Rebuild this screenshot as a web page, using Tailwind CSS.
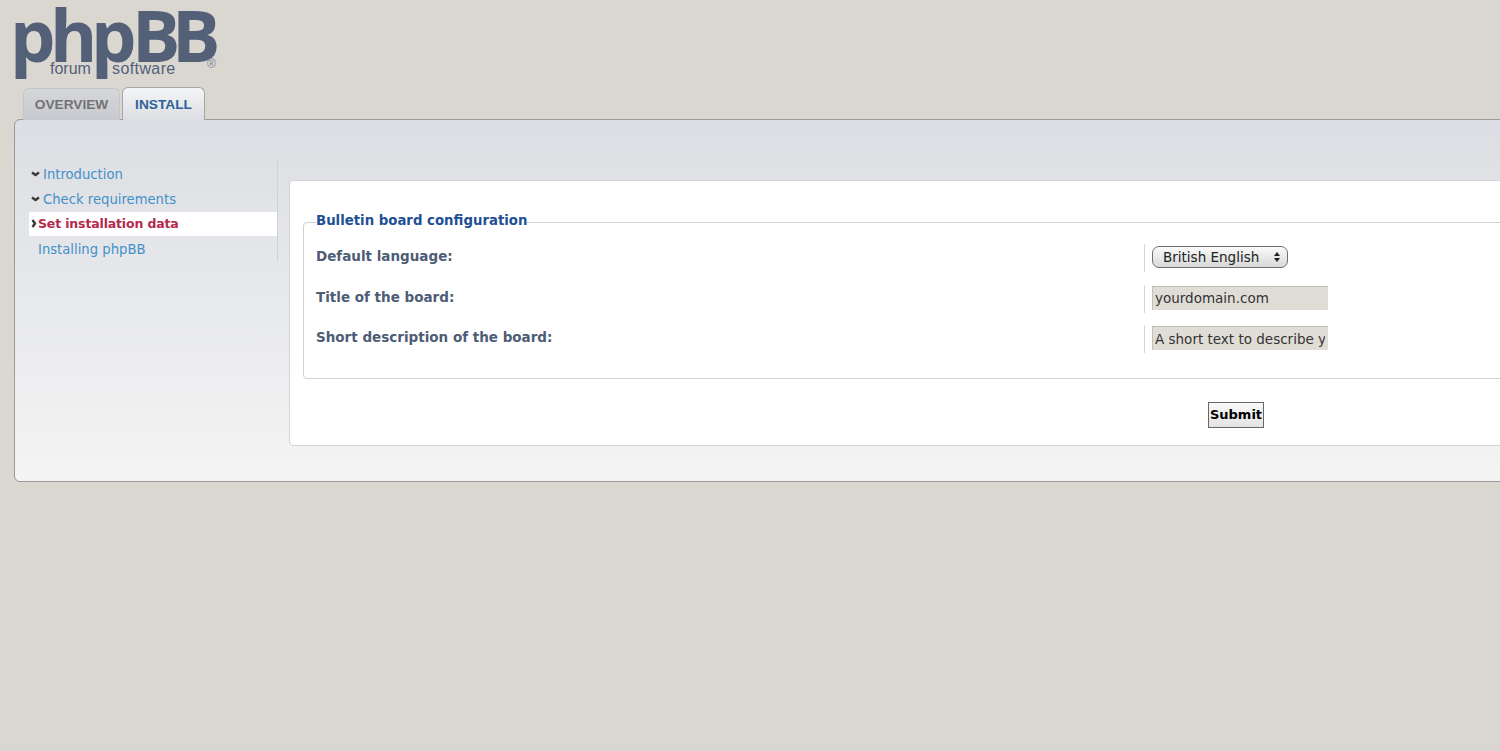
<!DOCTYPE html>
<html lang="en">
<head>
    <meta charset="UTF-8">
    <title>phpBB install</title>
    <script src="https://cdn.jsdelivr.net/npm/@tailwindcss/browser@4"></script>
</head>
<body class="bg-[#dad7d1] h-screen overflow-hidden font-['DejaVu_Sans',sans-serif]">
<div class="w-[1640px] pl-[14px]">
    <!-- logo -->
    <div class="h-[87px] relative">
        <svg class="absolute left-0 top-0 overflow-visible" width="220" height="87" viewBox="0 0 220 87">
            <text x="-4 36 77 118 158" y="62" font-family="Open Sans" font-weight="700" font-size="72" fill="#536078">phpBB</text>
            <text x="36" y="74" font-family="Liberation Sans" font-size="16" fill="#536078">forum</text>
            <text x="98" y="74" font-family="Liberation Sans" font-size="16" letter-spacing="0.4" fill="#536078">software</text>
            <text x="193" y="68" font-family="Liberation Sans" font-size="12" fill="#7d8798">®</text>
        </svg>
    </div>

    <!-- tabs -->
    <div class="flex items-end h-[33px] pl-[9px] gap-[2px] relative z-10 -mb-px">
        <div class="w-[97px] h-[32px] pt-[2px] flex items-center justify-center rounded-t-[6px] border border-b-0 border-[#c5c5c5] bg-gradient-to-b from-[#d6d7da] to-[#c7c9ce] text-[13.7px] font-bold text-[#737373] font-['Liberation_Sans']">OVERVIEW</div>
        <div class="w-[83px] h-[33px] pt-[2px] flex items-center justify-center rounded-t-[6px] border border-b-0 border-[#a5a5a5] bg-gradient-to-b from-[#f4f5f6] to-[#dcdee3] text-[13.7px] font-bold text-[#2f6299] font-['Liberation_Sans']">INSTALL</div>
    </div>

    <!-- panel -->
    <div class="h-[363px] rounded-[6px] border border-[#9a9a9a] bg-gradient-to-b from-[#dcdee3] to-[#f4f4f4] pt-[40px] pl-[14px] flex">
        <ul class="w-[249px] h-[102px] pt-[2px] border-r border-[#d0d2d6] text-[13.2px] shrink-0">
            <li class="h-[25px] flex items-center pl-[2px] gap-[3px] text-[#4391c9]">
                <svg width="9" height="6" viewBox="0 0 9 6" class="-mt-[2px]"><path d="M1 1.5 4.5 4 8 1.5" fill="none" stroke="#3a3a3a" stroke-width="2.4"/></svg>
                <span>Introduction</span>
            </li>
            <li class="h-[25px] flex items-center pl-[2px] gap-[3px] text-[#4391c9]">
                <svg width="9" height="6" viewBox="0 0 9 6" class="-mt-[2px]"><path d="M1 1.5 4.5 4 8 1.5" fill="none" stroke="#3a3a3a" stroke-width="2.4"/></svg>
                <span>Check requirements</span>
            </li>
            <li class="h-[24px] pt-[1px] flex items-center pl-[2px] gap-[1px] bg-white font-bold text-[#b5294c] text-[12.5px] tracking-[-0.15px]">
                <svg width="6" height="9" viewBox="0 0 6 9" class="-mt-[2px]"><path d="M1.5 1 4 4.5 1.5 8" fill="none" stroke="#3a3a3a" stroke-width="2.4"/></svg>
                <span>Set installation data</span>
            </li>
            <li class="h-[26px] pt-[1px] flex items-center pl-[9px] text-[#4391c9]">Installing phpBB</li>
        </ul>

        <div class="ml-[11px] mt-[20px] w-[1400px] h-[266px] bg-white rounded-[4px] border border-[#d4d4d4] pt-[31px] pl-[13px]">
            <fieldset class="h-[167px] rounded-[4px] border border-[#cfd1d3] pl-[12px]">
                <legend class="text-[13.3px] font-bold text-[#1f4f94] leading-[17px] pb-[4px]">Bulletin board configuration</legend>
                <dl class="pt-[11px]">
                    <div class="flex h-[40.5px]">
                        <dt class="w-[828px] text-[13.5px] font-bold text-[#4e5c76] pt-[2px]">Default language:</dt>
                        <dd class="border-l border-[#d7d7d7] h-[28px] pb-[2px] pl-[7px] flex items-center">
                            <div class="w-[136px] h-[22px] rounded-[7px] border border-[#6f6f6f] bg-gradient-to-b from-[#fafafa] to-[#d8d8d8] flex items-center justify-between pl-[10px] pr-[6px] text-[13.5px] text-[#222]">
                                <span>British English</span>
                                <svg width="8" height="12" viewBox="0 0 8 12"><path d="M4 1 7 5H1ZM4 11 1 7H7Z" fill="#222"/></svg>
                            </div>
                        </dd>
                    </div>
                    <div class="flex h-[40.5px]">
                        <dt class="w-[828px] text-[13.5px] font-bold text-[#4e5c76] pt-[2px]">Title of the board:</dt>
                        <dd class="border-l border-[#d7d7d7] h-[28px] pb-[2px] pl-[7px] flex items-center">
                            <input value="yourdomain.com" class="w-[176px] h-[24px] bg-[#e0ddd7] border-t border-l border-[#c2c0ba] pl-[2px] text-[13.5px] text-[#333] outline-none">
                        </dd>
                    </div>
                    <div class="flex h-[40.5px]">
                        <dt class="w-[828px] text-[13.5px] font-bold text-[#4e5c76] pt-[2px]">Short description of the board:</dt>
                        <dd class="border-l border-[#d7d7d7] h-[28px] pb-[2px] pl-[7px] flex items-center">
                            <input value="A short text to describe your forum" class="w-[176px] h-[24px] bg-[#e0ddd7] border-t border-l border-[#c2c0ba] pl-[2px] pr-[3px] text-[13.5px] text-[#333] outline-none">
                        </dd>
                    </div>
                </dl>
            </fieldset>
            <div class="pl-[905px] pt-[23px]">
                <button class="w-[56px] h-[26px] border border-[#666] bg-gradient-to-b from-[#f8f8f8] to-[#e4e4e4] text-[13px] font-bold text-black">Submit</button>
            </div>
        </div>
    </div>
</div>
</body>
</html>
